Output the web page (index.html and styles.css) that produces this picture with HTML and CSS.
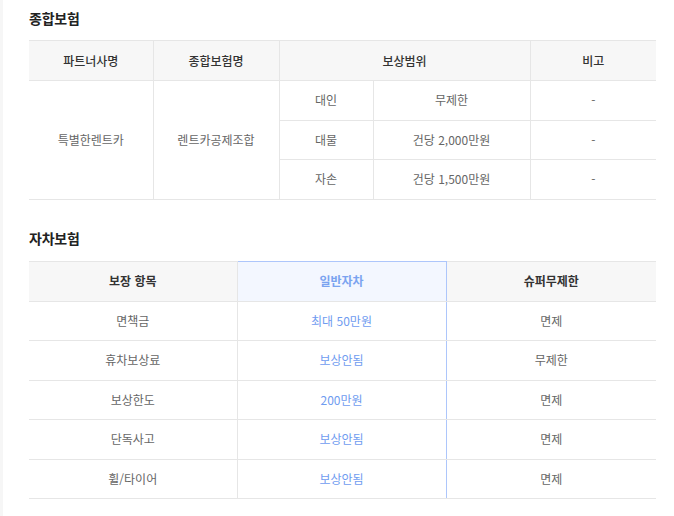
FILE: index.html
```html
<!DOCTYPE html>
<html lang="ko">
<head>
<meta charset="utf-8">
<link rel="stylesheet" href="styles.css">
</head>
<body>
<div class="page">
  <section class="section">
    <h2 class="title">종합보험</h2>
    <table class="tbl tbl1">
      <colgroup>
        <col style="width:124px"><col style="width:126px"><col style="width:94px"><col style="width:157px"><col style="width:126px">
      </colgroup>
      <thead>
        <tr><th>파트너사명</th><th>종합보험명</th><th colspan="2">보상범위</th><th>비고</th></tr>
      </thead>
      <tbody>
        <tr><td rowspan="3">특별한렌트카</td><td rowspan="3">렌트카공제조합</td><td>대인</td><td>무제한</td><td>-</td></tr>
        <tr><td>대물</td><td>건당 2,000만원</td><td>-</td></tr>
        <tr><td>자손</td><td>건당 1,500만원</td><td>-</td></tr>
      </tbody>
    </table>
  </section>
  <section class="section second">
    <h2 class="title">자차보험</h2>
    <table class="tbl tbl2">
      <colgroup>
        <col style="width:208px"><col style="width:209px"><col style="width:210px">
      </colgroup>
      <thead>
        <tr><th>보장 항목</th><th class="hl">일반자차</th><th>슈퍼무제한</th></tr>
      </thead>
      <tbody>
        <tr><td>면책금</td><td class="hl">최대 50만원</td><td>면제</td></tr>
        <tr><td>휴차보상료</td><td class="hl">보상안됨</td><td>무제한</td></tr>
        <tr><td>보상한도</td><td class="hl">200만원</td><td>면제</td></tr>
        <tr><td>단독사고</td><td class="hl">보상안됨</td><td>면제</td></tr>
        <tr><td>휠/타이어</td><td class="hl">보상안됨</td><td>면제</td></tr>
      </tbody>
    </table>
  </section>
</div>
</body>
</html>
```
FILE: styles.css
```css
html, body {
  margin: 0;
  padding: 0;
  background: #fff;
}
body {
  font-family: "Noto Sans CJK KR", "Noto Sans", sans-serif;
  color: #333;
}
.page {
  border-left: 3px solid #f6f6f6;
  padding: 8px 18px 0 26px;
  min-height: 508px;
}
.title {
  margin: 0;
  font-size: 14px;
  font-weight: 700;
  line-height: 20px;
  color: #222;
  letter-spacing: -0.2px;
}
.section .tbl {
  margin-top: 12px;
}
.second {
  margin-top: 28px;
}
.second .tbl {
  margin-top: 13px;
}
.tbl {
  width: 627px;
  border-collapse: collapse;
  table-layout: fixed;
  font-size: 12px;
}
.tbl th,
.tbl td {
  height: 38.5px;
  padding: 0;
  text-align: center;
  vertical-align: middle;
  border: 1px solid #e6e6e6;
  line-height: 16px;
}
.tbl thead th {
  height: 39px;
}
.tbl tr > :first-child { border-left: none; }
.tbl tr > :last-child { border-right: none; }
.tbl th {
  background: #f7f7f7;
  color: #333;
  font-weight: 500;
}
.tbl td {
  color: #666;
}
.tbl2 th {
  font-weight: 700;
  color: #333;
}
.tbl2 .hl {
  border-left: 1px solid #adc6fb;
  border-right: 1px solid #adc6fb;
  color: #6f9cf0;
}
.tbl2 th.hl {
  border-top: 1px solid #adc6fb;
  background: #f3f7ff;
  color: #7aa3f0;
}
```
